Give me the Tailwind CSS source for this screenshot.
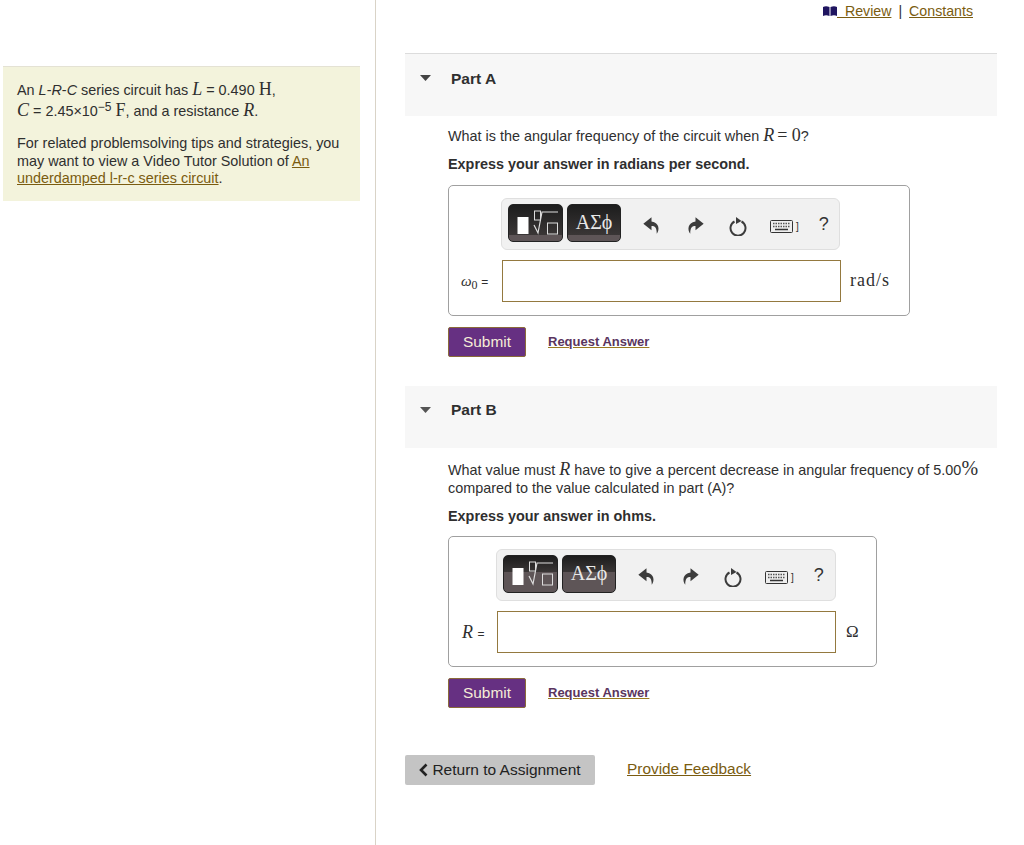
<!doctype html>
<html>
<head>
<meta charset="utf-8">
<script src="https://cdn.jsdelivr.net/npm/@tailwindcss/browser@4"></script>
</head>
<body class="bg-white">
<div class="flex h-[845px] w-[1024px] overflow-hidden font-['Liberation_Sans',sans-serif] text-[14.4px] text-[#2f2f2f]">
  <aside class="h-full w-[376px] shrink-0 border-r border-[#d9d3c7] pt-[66px] pl-[3px]">
    <div class="h-[135px] w-[357px] border-t border-[#e4e2d4] bg-[#f3f3dc] pl-[14px] pt-[13px] leading-[17.5px]">
      <p class="leading-[21px]">An <i>L</i>-<i>R</i>-<i>C</i> series circuit has <span class="font-['Liberation_Serif',serif] text-[18px] leading-none italic">L</span> = 0.490 <span class="font-['Liberation_Serif',serif] text-[18px] leading-none">H</span>,<br><span class="font-['Liberation_Serif',serif] text-[18px] leading-none italic">C</span> = 2.45×10<sup class="relative -top-[5px] align-baseline text-[12px] leading-none">−5</sup> <span class="font-['Liberation_Serif',serif] text-[18px] leading-none">F</span>, and a resistance <span class="font-['Liberation_Serif',serif] text-[18px] leading-none italic">R</span>.</p>
      <p class="mt-[13px]">For related problemsolving tips and strategies, you may want to view a Video Tutor Solution of <a class="text-[#7a5c10] underline">An underdamped l-r-c series circuit</a>.</p>
    </div>
  </aside>
  <main class="w-[592px] ml-[29px] shrink-0">
    <div class="flex h-[53px] justify-end pt-[3px] pr-[24px] text-[14.2px] leading-[16px]">
      <svg class="mt-[3px] h-[10px] w-[14px]" viewBox="0 0 14 10"><path fill="#1f1560" d="M0 1c2-1 4-1 6.500 0v9C4 9 2 9 0 10zM7.500 1c2.500-1 4.500-1 6.500 0v9c-2-1-4-1-6.500 0z"/></svg>
      <a class="text-[#7a5c10] underline">&nbsp;&nbsp;Review</a><span class="mx-[7px]">|</span><a class="text-[#7a5c10] underline">Constants</a>
    </div>

    <section class="h-[333px]">
      <div class="flex h-[63px] items-start border-t border-[#dcdcdc] bg-[#f7f7f7] pt-[16px]">
        <svg class="mt-[5px] ml-[15px] h-[6px] w-[11px]" viewBox="0 0 11 6"><path fill="#444" d="M0 0h11L5.500 6z"/></svg>
        <h2 class="ml-[20px] text-[15.5px] leading-[18px] font-bold">Part A</h2>
      </div>
      <div class="pl-[43px]">
        <p class="mt-[10px] leading-[18px]">What is the angular frequency of the circuit when <span class="font-['Liberation_Serif',serif] text-[18px] leading-none italic">R</span><span class="ml-[3px] font-['Liberation_Serif',serif] text-[18px] leading-none">= 0</span>?</p>
        <p class="mt-[10px] leading-[18px] font-bold">Express your answer in radians per second.</p>
        <div class="mt-[12px] h-[131px] w-[462px] rounded-[5px] border border-[#a0a0a0] pt-[12px]">
          <div class="ml-[52px] flex h-[52px] w-[339px] items-center rounded-[6px] border border-[#dfdfdf] bg-[#f1f1f1] pl-[6px]">
            <div class="mb-[2px] flex h-[38px] w-[55px] items-start justify-center rounded-[5px] border border-[#222] bg-gradient-to-b from-[#1d1d1d] from-0% via-[#3a3636] via-84% to-[#5e5557] to-84% pt-[2px]">
              <svg class="h-[30px] w-[50px]" viewBox="0 0 50 30"><rect x="6.500" y="10" width="11" height="17" fill="#fff"/><rect x="23.500" y="4" width="6" height="9" fill="none" stroke="#ddd"/><path d="M23 18l4 8 4-21h16" fill="none" stroke="#ddd" stroke-width="1.200"/><rect x="36.500" y="16" width="10" height="11" fill="none" stroke="#ddd"/></svg>
            </div>
            <div class="ml-[4px] mb-[2px] flex h-[38px] w-[54px] items-start justify-center rounded-[5px] border border-[#222] bg-gradient-to-b from-[#1d1d1d] via-[#3a3636] via-84% to-[#5e5557] to-84% pt-[6px] font-['Liberation_Serif',serif] text-[20px] leading-[22px] text-[#e8e8e8]">ΑΣϕ</div>
            <svg class="ml-[20px] mt-[3px] h-[21px] w-[21px]" viewBox="0 0 18 18"><path fill="#3c3c3c" d="M9 2L2 7.500 9 13V9.500c3 0 4.500 1.500 4.500 6.500 2.500-3 2.500-9.500-4.500-10.500z"/></svg>
            <svg class="ml-[23px] mt-[3px] h-[21px] w-[21px]" viewBox="0 0 18 18"><path fill="#3c3c3c" d="M9 2l7 5.500L9 13V9.500c-3 0-4.500 1.500-4.500 6.500-2.500-3-2.500-9.500 4.500-10.500z"/></svg>
            <svg class="ml-[22px] mt-[3px] h-[20px] w-[20px]" viewBox="0 0 20 20"><path fill="none" stroke="#3c3c3c" stroke-width="2" d="M6.500 5.500a7.500 7.500 0 1 0 7 0"/><path fill="#3c3c3c" d="M8 1l5.500 4L8 8z"/></svg>
            <svg class="ml-[22px] mt-[5px] h-[13px] w-[23px]" viewBox="0 0 23 13"><rect x=".5" y=".5" width="22" height="12" rx="1" fill="#eee" stroke="#333"/><path stroke="#555" stroke-width="1.500" stroke-dasharray="1.500 1" d="M3 3.500h17M3 6.500h17"/><path stroke="#333" stroke-width="1.500" d="M5 9.500h13"/></svg>
            <span class="ml-[3px] mt-[5px] text-[10px] leading-[13px]">]</span>
            <span class="ml-[20px] text-[18px] leading-[18px] text-[#333]">?</span>
          </div>
          <div class="mt-[10px] flex h-[42px] items-center">
            <span class="ml-[12px] w-[41px] font-['Liberation_Serif',serif] text-[15px]"><i>ω</i><sub class="align-baseline text-[12px]">0</sub> <span class="font-['Liberation_Sans',sans-serif] text-[12px]">=</span></span>
            <div class="h-[42px] w-[339px] border border-[#94793f] bg-white"></div>
            <span class="ml-[9px] mb-[2px] font-['Liberation_Serif',serif] text-[18px] tracking-[1px]">rad/s</span>
          </div>
        </div>
        <div class="mt-[11px] flex items-center">
          <button class="h-[30px] w-[78px] rounded-[2px] border border-[#8a6a3a] bg-[#663082] text-[15.4px] text-[#f5ecd7]">Submit</button>
          <a class="ml-[22px] mb-[1px] text-[13px] font-bold text-[#5a3560] underline decoration-[#9a7a20]">Request Answer</a>
        </div>
      </div>
    </section>

    <section class="h-[369px]">
      <div class="flex h-[62px] items-start bg-[#f7f7f7] pt-[15px]">
        <svg class="mt-[6px] ml-[15px] h-[6px] w-[11px]" viewBox="0 0 11 6"><path fill="#555" d="M0 0h11L5.500 6z"/></svg>
        <h2 class="ml-[20px] text-[15.5px] leading-[18px] font-bold">Part B</h2>
      </div>
      <div class="pl-[43px]">
        <p class="mt-[12px] w-[540px] leading-[18px]">What value must <span class="font-['Liberation_Serif',serif] text-[18px] leading-none italic">R</span> have to give a percent decrease in angular frequency of 5.00<span class="font-['Liberation_Serif',serif] text-[20px] leading-[0]">%</span> compared to the value calculated in part (A)?</p>
        <p class="mt-[10px] leading-[18px] font-bold">Express your answer in ohms.</p>
        <div class="mt-[11px] h-[131px] w-[429px] rounded-[5px] border border-[#a0a0a0] pt-[12px]">
          <div class="ml-[47px] flex h-[52px] w-[340px] items-center rounded-[6px] border border-[#dfdfdf] bg-[#f1f1f1] pl-[6px]">
            <div class="mb-[2px] flex h-[38px] w-[55px] items-start justify-center rounded-[5px] border border-[#222] bg-gradient-to-b from-[#1d1d1d] via-[#3a3636] via-45% to-[#5e5557] to-45% pt-[2px]">
              <svg class="h-[30px] w-[50px]" viewBox="0 0 50 30"><rect x="6.500" y="10" width="11" height="17" fill="#fff"/><rect x="23.500" y="4" width="6" height="9" fill="none" stroke="#ddd"/><path d="M23 18l4 8 4-21h16" fill="none" stroke="#ddd" stroke-width="1.200"/><rect x="36.500" y="16" width="10" height="11" fill="none" stroke="#ddd"/></svg>
            </div>
            <div class="ml-[4px] mb-[2px] flex h-[38px] w-[54px] items-start justify-center rounded-[5px] border border-[#222] bg-gradient-to-b from-[#1d1d1d] via-[#3a3636] via-45% to-[#5e5557] to-45% pt-[6px] font-['Liberation_Serif',serif] text-[20px] leading-[22px] text-[#e8e8e8]">ΑΣϕ</div>
            <svg class="ml-[20px] mt-[3px] h-[21px] w-[21px]" viewBox="0 0 18 18"><path fill="#3c3c3c" d="M9 2L2 7.500 9 13V9.500c3 0 4.500 1.500 4.500 6.500 2.500-3 2.500-9.500-4.500-10.500z"/></svg>
            <svg class="ml-[23px] mt-[3px] h-[21px] w-[21px]" viewBox="0 0 18 18"><path fill="#3c3c3c" d="M9 2l7 5.500L9 13V9.500c-3 0-4.500 1.500-4.500 6.500-2.500-3-2.500-9.500 4.500-10.500z"/></svg>
            <svg class="ml-[22px] mt-[3px] h-[20px] w-[20px]" viewBox="0 0 20 20"><path fill="none" stroke="#3c3c3c" stroke-width="2" d="M6.500 5.500a7.500 7.500 0 1 0 7 0"/><path fill="#3c3c3c" d="M8 1l5.500 4L8 8z"/></svg>
            <svg class="ml-[22px] mt-[5px] h-[13px] w-[23px]" viewBox="0 0 23 13"><rect x=".5" y=".5" width="22" height="12" rx="1" fill="#eee" stroke="#333"/><path stroke="#555" stroke-width="1.500" stroke-dasharray="1.500 1" d="M3 3.500h17M3 6.500h17"/><path stroke="#333" stroke-width="1.500" d="M5 9.500h13"/></svg>
            <span class="ml-[3px] mt-[5px] text-[10px] leading-[13px]">]</span>
            <span class="ml-[20px] text-[18px] leading-[18px] text-[#333]">?</span>
          </div>
          <div class="mt-[10px] flex h-[42px] items-center">
            <span class="ml-[13px] w-[35px] font-['Liberation_Serif',serif] text-[18px]"><i>R</i> <span class="font-['Liberation_Sans',sans-serif] text-[12px]">=</span></span>
            <div class="h-[42px] w-[339px] border border-[#94793f] bg-white"></div>
            <span class="ml-[10px] font-['Liberation_Serif',serif] text-[17px]">Ω</span>
          </div>
        </div>
        <div class="mt-[11px] flex items-center">
          <button class="h-[30px] w-[78px] rounded-[2px] border border-[#8a6a3a] bg-[#663082] text-[15.4px] text-[#f5ecd7]">Submit</button>
          <a class="ml-[22px] mb-[1px] text-[13px] font-bold text-[#5a3560] underline decoration-[#9a7a20]">Request Answer</a>
        </div>
      </div>
    </section>

    <div class="flex items-center">
      <button class="flex h-[30px] w-[190px] items-center justify-center rounded-[2px] bg-[#c4c4c4] pb-[1px] text-[15.5px] text-[#222]">
        <svg class="mr-[4px] h-[14px] w-[9px]" viewBox="0 0 9 14"><path fill="none" stroke="#222" stroke-width="2.600" d="M7.500 1.500L2 7l5.500 5.500"/></svg>Return to Assignment
      </button>
      <a class="ml-[32px] mb-[2px] text-[15.4px] text-[#7a5c10] underline">Provide Feedback</a>
    </div>
  </main>
</div>
</body>
</html>
